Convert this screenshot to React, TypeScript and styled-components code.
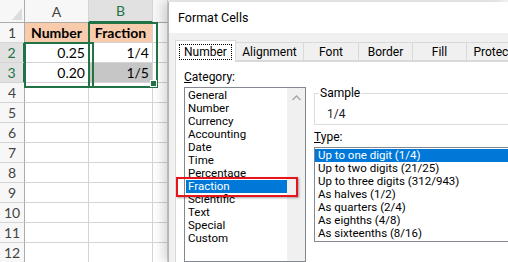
import styled, { createGlobalStyle } from "styled-components";

const GlobalStyle = createGlobalStyle`
  html, body {
    margin: 0;
    padding: 0;
  }
  body {
    width: 508px;
    height: 262px;
    overflow: hidden;
    background: #fff;
  }
`;

const Screen = styled.div`
  display: flex;
  width: 508px;
  height: 262px;
  overflow: hidden;
  background: #f3f3f3;
`;

/* ---------- spreadsheet ---------- */

const Sheet = styled.div`
  position: relative;
  flex: 0 0 168px;
  display: grid;
  grid-template-columns: 25px 64px 64px 15px;
  grid-template-rows: 23px repeat(12, 20px);
  background: #fff;
  font-family: Lato, "Liberation Sans", sans-serif;
  font-size: 14px;
  color: #000;
`;

const Corner = styled.div`
  display: flex;
  align-items: flex-end;
  justify-content: flex-end;
  padding: 0 2px 2px 0;
  background: #f7f7f7;
  border-right: 1px solid #ababab;
  border-bottom: 1px solid #ababab;

  &::after {
    content: "";
    width: 10px;
    height: 12px;
    background: #dcdcdc;
    clip-path: polygon(100% 0, 100% 100%, 0 100%);
  }
`;

const ColHeader = styled.div<{ $active?: boolean }>`
  display: flex;
  align-items: center;
  justify-content: center;
  background: ${(p) => (p.$active ? "#e1e1e1" : "#f7f7f7")};
  color: ${(p) => (p.$active ? "#217346" : "#444")};
  border-right: 1px solid #d4d4d4;
  border-bottom: ${(p) => (p.$active ? "2px solid #217346" : "1px solid #ababab")};
`;

const RowHeader = styled.div<{ $active?: boolean }>`
  display: flex;
  align-items: center;
  justify-content: center;
  background: ${(p) => (p.$active ? "#e1e1e1" : "#f7f7f7")};
  color: ${(p) => (p.$active ? "#217346" : "#444")};
  border-right: ${(p) => (p.$active ? "2px solid #217346" : "1px solid #ababab")};
  border-bottom: 1px solid #d4d4d4;
`;

const Cell = styled.div<{ $head?: boolean; $shaded?: boolean }>`
  display: flex;
  align-items: center;
  justify-content: ${(p) => (p.$head ? "center" : "flex-end")};
  padding: 0 3px;
  font-weight: ${(p) => (p.$head ? 700 : 400)};
  background: ${(p) => (p.$head ? "#f8cbad" : p.$shaded ? "#c6c6c6" : "#fff")};
  border-right: 1px solid #d4d4d4;
  border-bottom: 1px solid #d4d4d4;
`;

const Selection = styled.div`
  position: absolute;
  border: 2px solid #217346;
  pointer-events: none;
`;

const FillHandle = styled.div`
  position: absolute;
  left: 150px;
  top: 80px;
  width: 5px;
  height: 5px;
  background: #217346;
  border: 1px solid #fff;
`;

/* ---------- dialog ---------- */

const Dialog = styled.div`
  position: relative;
  z-index: 1;
  flex: 1;
  min-width: 0;
  margin-top: 2px;
  display: flex;
  flex-direction: column;
  background: #f0f0f0;
  border-left: 1px solid #b4b4b4;
  box-shadow: -5px 0 10px rgba(0, 0, 0, 0.16);
  font-family: Roboto, "Noto Sans", sans-serif;
  font-size: 12px;
  color: #000;
`;

const TitleBar = styled.div`
  height: 31px;
  display: flex;
  align-items: center;
  padding-left: 9px;
  background: #fff;
  font-size: 12.5px;
`;

const Body = styled.div`
  flex: 1;
  display: flex;
  flex-direction: column;
  padding: 7px 0 0 6px;
  min-height: 0;
`;

const Tabs = styled.div`
  display: flex;
  align-items: flex-end;
  height: 21px;
`;

const Tab = styled.div<{ $w: number; $active?: boolean }>`
  position: relative;
  z-index: ${(p) => (p.$active ? 2 : 1)};
  flex: 0 0 ${(p) => p.$w}px;
  height: ${(p) => (p.$active ? 22 : 19)}px;
  margin-bottom: ${(p) => (p.$active ? -1 : 0)}px;
  margin-right: -1px;
  display: flex;
  align-items: center;
  justify-content: center;
  box-sizing: border-box;
  background: ${(p) => (p.$active ? "#fff" : "#f0f0f0")};
  border: 1px solid #d9d9d9;
  border-bottom: ${(p) => (p.$active ? "none" : "1px solid #d9d9d9")};
  white-space: nowrap;
  overflow: hidden;
`;

const FocusLabel = styled.span`
  padding: 0 4px;
  line-height: 14px;
  border: 1px dotted #000;
`;

const Panel = styled.div`
  position: relative;
  flex: 1;
  display: flex;
  gap: 8px;
  padding: 7px 0 0 8px;
  background: #fff;
  border: 1px solid #d9d9d9;
  border-right: none;
  border-bottom: none;
  overflow: hidden;
`;

const Column = styled.div<{ $w: number }>`
  flex: 0 0 ${(p) => p.$w}px;
  display: flex;
  flex-direction: column;
`;

const Label = styled.div<{ $gap?: number }>`
  line-height: 16px;
  margin-top: ${(p) => p.$gap ?? 0}px;
  margin-bottom: 2px;
`;

const ListBox = styled.div<{ $h: number }>`
  display: flex;
  height: ${(p) => p.$h}px;
  box-sizing: border-box;
  border: 1px solid #828790;
  background: #fff;
`;

const Items = styled.div`
  flex: 1;
  min-width: 0;
  padding-top: 1px;
`;

const Item = styled.div<{ $selected?: boolean; $inset?: number }>`
  height: 13px;
  line-height: 13px;
  font-size: 11.5px;
  margin-left: ${(p) => p.$inset ?? 0}px;
  padding-left: ${(p) => 3 - (p.$inset ?? 0)}px;
  white-space: nowrap;
  background: ${(p) => (p.$selected ? "#0078d7" : "transparent")};
  color: ${(p) => (p.$selected ? "#fff" : "#000")};
`;

const ScrollTrack = styled.div`
  flex: 0 0 18px;
  display: flex;
  justify-content: center;
  padding-top: 7px;
  background: #f0f0f0;
`;

const GroupBox = styled.div`
  position: relative;
  margin-top: 24px;
  height: 32px;
  box-sizing: border-box;
  padding: 12px 0 0 12px;
  line-height: 16px;
  border: 1px solid #dcdcdc;
  border-right: none;
  color: #1b1b2b;
`;

const GroupTitle = styled.span`
  position: absolute;
  top: -9px;
  left: 4px;
  padding: 0 1px;
  line-height: 16px;
  background: #fff;
  color: #000;
`;

const Callout = styled.div`
  position: absolute;
  left: 0px;
  top: 115px;
  width: 122px;
  height: 20px;
  box-sizing: border-box;
  border: 2px solid #e8141b;
  box-shadow: 1px 1px 2px rgba(0, 0, 0, 0.35);
  pointer-events: none;
`;

const categories = [
  "General",
  "Number",
  "Currency",
  "Accounting",
  "Date",
  "Time",
  "Percentage",
  "Fraction",
  "Scientific",
  "Text",
  "Special",
  "Custom",
];

const types = [
  "Up to one digit (1/4)",
  "Up to two digits (21/25)",
  "Up to three digits (312/943)",
  "As halves (1/2)",
  "As quarters (2/4)",
  "As eighths (4/8)",
  "As sixteenths (8/16)",
];

const tabs = [
  { name: "Number", w: 61 },
  { name: "Alignment", w: 69 },
  { name: "Font", w: 56 },
  { name: "Border", w: 55 },
  { name: "Fill", w: 55 },
  { name: "Protection", w: 70 },
];

const rows: { n: number; a?: string; b?: string; head?: boolean; active?: boolean; shade?: boolean }[] = [
  { n: 1, a: "Number", b: "Fraction", head: true },
  { n: 2, a: "0.25", b: "1/4", active: true },
  { n: 3, a: "0.20", b: "1/5", active: true, shade: true },
  ...[4, 5, 6, 7, 8, 9, 10, 11, 12].map((n) => ({ n })),
];

const ChevronUp = () => (
  <svg width="9" height="6" viewBox="0 0 9 6">
    <path d="M0.5 5 L4.5 1 L8.5 5" fill="none" stroke="#a6a6a6" strokeWidth="1.4" />
  </svg>
);

export default function App() {
  return (
    <>
      <GlobalStyle />
      <Screen>
        <Sheet>
          <Corner />
          <ColHeader>A</ColHeader>
          <ColHeader $active>B</ColHeader>
          <ColHeader />
          {rows.map((r) => (
            <>
              <RowHeader key={`h${r.n}`} $active={r.active}>
                {r.n}
              </RowHeader>
              <Cell key={`a${r.n}`} $head={r.head}>
                {r.a}
              </Cell>
              <Cell key={`b${r.n}`} $head={r.head} $shaded={r.shade}>
                {r.b}
              </Cell>
              <Cell key={`c${r.n}`} />
            </>
          ))}
          <Selection style={{ left: 24, top: 42, width: 66, height: 42 }} />
          <Selection style={{ left: 88, top: 22, width: 66, height: 62 }} />
          <FillHandle />
        </Sheet>

        <Dialog>
          <TitleBar>Format Cells</TitleBar>
          <Body>
            <Tabs>
              {tabs.map((t, i) => (
                <Tab key={t.name} $w={t.w} $active={i === 0}>
                  {i === 0 ? <FocusLabel>{t.name}</FocusLabel> : t.name}
                </Tab>
              ))}
            </Tabs>
            <Panel>
              <Column $w={122}>
                <Label>
                  <u>C</u>ategory:
                </Label>
                <ListBox $h={200}>
                  <Items>
                    {categories.map((c) => (
                      <Item key={c} $inset={1} $selected={c === "Fraction"}>
                        {c}
                      </Item>
                    ))}
                  </Items>
                  <ScrollTrack>
                    <ChevronUp />
                  </ScrollTrack>
                </ListBox>
              </Column>
              <Column $w={220}>
                <GroupBox>
                  <GroupTitle>Sample</GroupTitle>
                  1/4
                </GroupBox>
                <Label $gap={4}>
                  <u>T</u>ype:
                </Label>
                <ListBox $h={95}>
                  <Items>
                    {types.map((t, i) => (
                      <Item key={t} $selected={i === 0}>
                        {t}
                      </Item>
                    ))}
                  </Items>
                </ListBox>
              </Column>
              <Callout />
            </Panel>
          </Body>
        </Dialog>
      </Screen>
    </>
  );
}
